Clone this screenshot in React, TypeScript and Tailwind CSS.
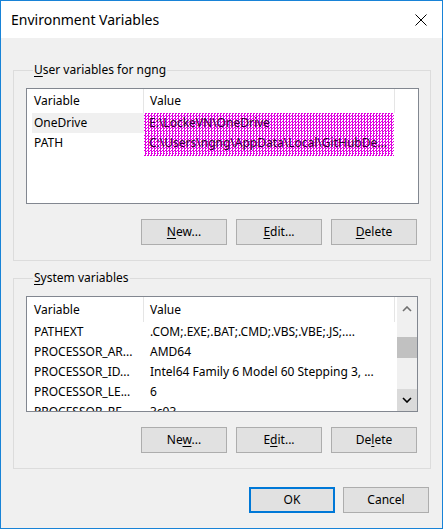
import React from "react";

const font = { fontFamily: '"Noto Sans", "Segoe UI", sans-serif' };

function Btn({ label, u }: { label: string; u: number }) {
  return (
    <button className="w-[86px] h-[26px] bg-[#e1e1e1] text-[12px] text-black leading-none flex items-center justify-center border border-[#adadad]">
      <span>
        {label.slice(0, u)}
        <span className="underline underline-offset-2">{label[u]}</span>
        {label.slice(u + 1)}
      </span>
    </button>
  );
}

function Header({ h }: { h: string }) {
  return (
    <div className={`grid grid-cols-[117px_251px] ${h} shrink-0`}>
      <div className="border-r border-[#e5e5e5] pl-[7px] flex items-center">Variable</div>
      <div className="border-r border-[#e5e5e5] pl-[6px] flex items-center">Value</div>
    </div>
  );
}

function Group({
  title,
  u,
  mt,
  children,
  buttons,
}: {
  title: string;
  u: number;
  mt: string;
  children: React.ReactNode;
  buttons: [string, number][];
}) {
  return (
    <fieldset className={`${mt} ml-[12px] w-[418px] border border-[#dcdcdc] pl-[12px] pt-[10px] pb-[15px]`}>
      <legend className="ml-[7px] px-[1px] text-[12px] leading-[16px] text-black">
        {title.slice(0, u)}
        <span className="underline underline-offset-2">{title[u]}</span>
        {title.slice(u + 1)}
      </legend>
      {children}
      <div className="mt-[15px] w-[391px] flex justify-end gap-[9px]">
        {buttons.map(([l, i]) => (
          <Btn key={l} label={l} u={i} />
        ))}
      </div>
    </fieldset>
  );
}

const dots = "bg-[repeating-conic-gradient(#e000e0_0_25%,#ffffff_0_50%)] bg-[length:3px_3px]";

const sysRows = [
  ["PATHEXT", ".COM;.EXE;.BAT;.CMD;.VBS;.VBE;.JS;...."],
  ["PROCESSOR_AR...", "AMD64"],
  ["PROCESSOR_ID...", "Intel64 Family 6 Model 60 Stepping 3, ..."],
  ["PROCESSOR_LE...", "6"],
  ["PROCESSOR_RE...", "3c03"],
];

export default function App() {
  return (
    <div style={font} className="w-[443px] h-[529px] border border-[#1883d7] bg-[#f0f0f0] flex flex-col text-[12px] text-black">
      <div className="h-[37px] shrink-0 bg-white flex items-center justify-between pl-[10px] pr-[15px]">
        <span className="text-[14px] text-black">Environment Variables</span>
        <svg width="12" height="12" viewBox="0 0 12 12">
          <path d="M0.5 0.5 L11.5 11.5 M11.5 0.5 L0.5 11.5" stroke="#000" strokeWidth="1" />
        </svg>
      </div>

      <Group
        title="User variables for ngng"
        u={0}
        mt="mt-[24px]"
        buttons={[
          ["New...", 0],
          ["Edit...", 0],
          ["Delete", 0],
        ]}
      >
        <div className="w-[393px] h-[116px] border border-[#828790] bg-white flex flex-col">
          <Header h="h-[24px]" />
          <div className="grid grid-cols-[5px_112px_250px] h-[20px]">
            <div />
            <div className="bg-[#f0f0f0] pl-[2px] flex items-center">OneDrive</div>
            <div className={`pl-[5px] flex items-center text-[#300030] ${dots}`}>E:\LockeVN\OneDrive</div>
          </div>
          <div className="grid grid-cols-[5px_112px_250px] h-[20px]">
            <div />
            <div className="pl-[2px] flex items-center">PATH</div>
            <div className={`pl-[5px] flex items-center text-[#300030] ${dots}`}>
              C:\Users\ngng\AppData\Local\GitHubDe...
            </div>
          </div>
          <div className="grid grid-cols-[117px_250px] h-[3px]">
            <div />
            <div className={dots} />
          </div>
        </div>
      </Group>

      <Group
        title="System variables"
        u={0}
        mt="mt-[9px]"
        buttons={[
          ["New...", 2],
          ["Edit...", 1],
          ["Delete", 2],
        ]}
      >
        <div className="w-[392px] h-[116px] border border-[#828790] bg-white grid grid-cols-[370px_20px] overflow-hidden">
          <div className="flex flex-col overflow-hidden">
            <Header h="h-[25px]" />
            {sysRows.map(([n, v]) => (
              <div key={n} className="grid grid-cols-[117px_251px] h-[20px] shrink-0">
                <div className="pl-[7px] flex items-center whitespace-nowrap overflow-hidden">{n}</div>
                <div className="pl-[6px] flex items-center whitespace-nowrap overflow-hidden">{v}</div>
              </div>
            ))}
          </div>
          <div className="bg-[#f0f0f0] flex flex-col">
            <div className="h-[23px] flex items-center justify-center">
              <svg width="10" height="6" viewBox="0 0 10 6">
                <path d="M1 5 L5 1 L9 5" fill="none" stroke="#707070" strokeWidth="1.6" />
              </svg>
            </div>
            <div className="mt-[17px] h-[21px] bg-[#c1c1c1]" />
            <div className="flex-1" />
            <div className="h-[22px] bg-[#dadada] flex items-center justify-center">
              <svg width="10" height="6" viewBox="0 0 10 6">
                <path d="M1 1 L5 5 L9 1" fill="none" stroke="#000" strokeWidth="1.6" />
              </svg>
            </div>
          </div>
        </div>
      </Group>

      <div className="mt-[18px] mr-[13px] flex justify-end gap-[8px]">
        <button className="w-[86px] h-[26px] bg-[#e1e1e1] border-2 border-[#0078d7] text-[12px] flex items-center justify-center">
          OK
        </button>
        <button className="w-[86px] h-[26px] bg-[#e1e1e1] border border-[#adadad] text-[12px] flex items-center justify-center">
          Cancel
        </button>
      </div>
    </div>
  );
}
